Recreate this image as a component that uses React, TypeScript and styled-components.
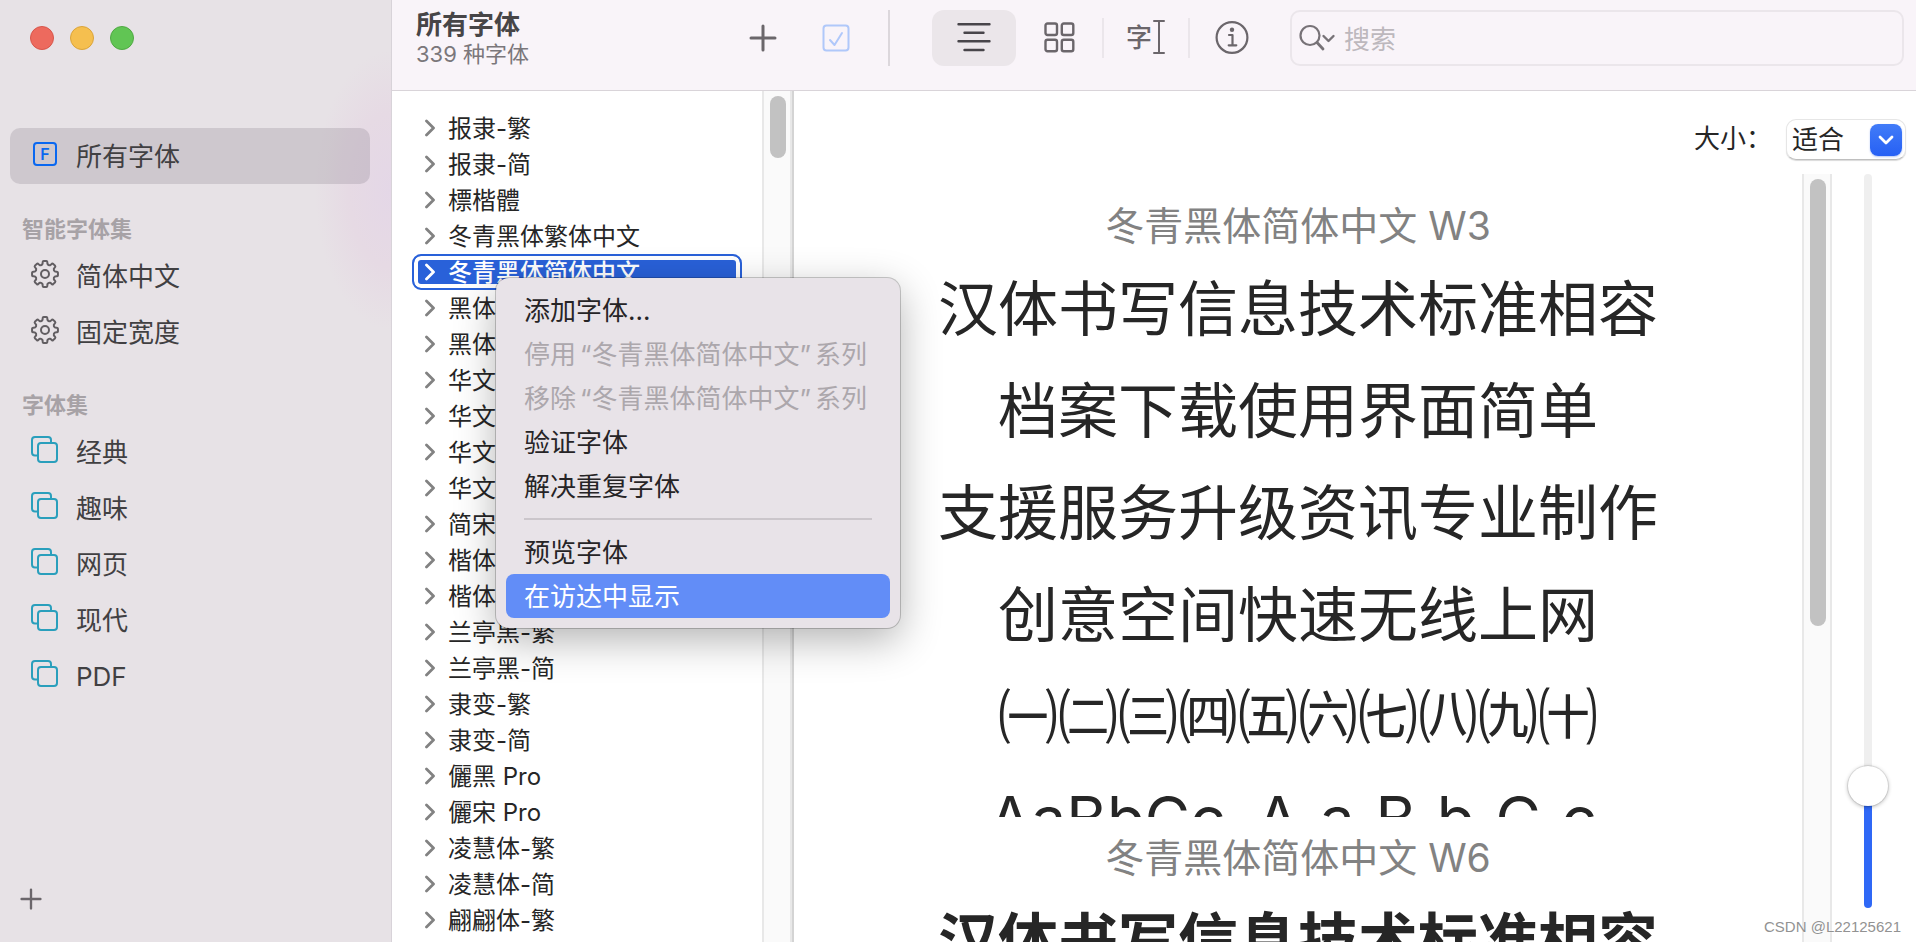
import React from "react";
import styled, { createGlobalStyle, css } from "styled-components";

const GlobalStyle = createGlobalStyle`
  *, *::before, *::after { box-sizing: border-box; }
  html, body, #root { height: 100%; margin: 0; }
  body {
    font-family: Inter, "Noto Sans CJK SC", sans-serif;
    color: #262626;
    background: #fff;
    overflow: hidden;
  }
  button, input, select { font: inherit; color: inherit; }
  button { border: 0; padding: 0; background: none; cursor: default; }
  ul { list-style: none; margin: 0; padding: 0; }
  svg { display: block; flex: none; }
`;

const Window = styled.div`
  position: relative;
  display: grid;
  grid-template-columns: 392px minmax(0, 1fr);
  grid-template-rows: minmax(0, 1fr);
  height: 100vh;
  overflow: hidden;
`;

/* ---------- Sidebar ---------- */

const Sidebar = styled.aside`
  display: flex;
  flex-direction: column;
  padding: 0 21px 0 10px;
  border-right: 1px solid #d8d3d9;
  background:
    radial-gradient(ellipse 76px 140px at 100% 190px, #e4d7e7 0%, #e6dae4 55%, rgba(231, 226, 230, 0) 100%),
    #e7e2e6;
`;

const WindowButtons = styled.div`
  display: flex;
  gap: 16px;
  height: 128px;
  padding: 26px 20px 0;
`;

const WindowButton = styled.button<{ $fill: string; $edge: string }>`
  width: 24px;
  height: 24px;
  border-radius: 50%;
  border: 1px solid ${(p) => p.$edge};
  background: ${(p) => p.$fill};
`;

const SideHeading = styled.h2`
  height: 64px;
  margin: 0;
  padding: 26px 12px 0;
  font-size: 22px;
  line-height: 38px;
  font-weight: 700;
  color: #a7a2a6;
`;

const SideItem = styled.button<{ $active?: boolean }>`
  display: flex;
  align-items: center;
  width: 100%;
  height: 56px;
  padding: 0 20px;
  gap: 16px;
  border-radius: 10px;
  font-size: 26px;
  line-height: 36px;
  color: #414042;
  text-align: left;
  ${(p) => p.$active && css`background: rgba(120, 110, 122, 0.22);`}
`;

const Label = styled.span`
  padding-top: 2px;
`;

const IconSlot = styled.span`
  display: flex;
  align-items: center;
  justify-content: center;
  width: 30px;
  height: 34px;
  padding-bottom: 4px;
`;

const LetterBox = styled.span`
  width: 24px;
  height: 24px;
  border: 2px solid #0a68f0;
  border-radius: 4px;
  font-size: 16px;
  line-height: 20px;
  font-weight: 600;
  text-align: center;
  color: #0a68f0;
`;

const AddCollection = styled.button`
  display: flex;
  align-items: center;
  justify-content: center;
  margin: auto 0 31px 9px;
  width: 24px;
  height: 24px;
`;

/* ---------- Toolbar ---------- */

const Main = styled.main`
  display: grid;
  grid-template-rows: 91px minmax(0, 1fr);
  min-height: 0;
`;

const Toolbar = styled.header`
  display: flex;
  align-items: flex-start;
  padding: 10px 12px 0 24px;
  border-bottom: 1px solid #d9d4d9;
  background: #f9f4f9;
`;

const TitleBlock = styled.div`
  flex: none;
  width: 320px;
`;

const Title = styled.h1`
  margin: 0;
  font-size: 26px;
  line-height: 30px;
  font-weight: 700;
  color: #474547;
`;

const Subtitle = styled.p`
  margin: 0;
  font-size: 22px;
  line-height: 28px;
  color: #7b777b;
`;

const ToolButton = styled.button<{ $width: number; $active?: boolean }>`
  display: flex;
  align-items: center;
  justify-content: center;
  flex: none;
  width: ${(p) => p.$width}px;
  height: 56px;
  border-radius: 12px;
  background: ${(p) => (p.$active ? "#ebe6ea" : "transparent")};
  color: #6b666b;
`;

const Divider = styled.span<{ $tall?: boolean }>`
  flex: none;
  width: 2px;
  height: ${(p) => (p.$tall ? 56 : 40)}px;
  margin: ${(p) => (p.$tall ? "0 42px 0 6px" : "8px 0 0")};
  background: ${(p) => (p.$tall ? "#dcd7dc" : "#ebe6eb")};
`;

const TextGlyph = styled.span`
  font-size: 26px;
  line-height: 34px;
  font-weight: 500;
`;

const SearchBox = styled.label`
  display: flex;
  align-items: center;
  flex: 1;
  min-width: 0;
  height: 56px;
  margin-left: 16px;
  padding: 0 8px 0 7px;
  gap: 8px;
  border: 2px solid #ebe6eb;
  border-radius: 10px;
`;

const SearchInput = styled.input`
  flex: 1;
  min-width: 0;
  height: 40px;
  padding: 2px 0 0;
  border: 0;
  outline: 0;
  background: none;
  font-size: 26px;
  &::placeholder { color: #bdb8bd; opacity: 1; }
`;

/* ---------- Font list ---------- */

const Panes = styled.div`
  display: grid;
  grid-template-columns: 370px 30px minmax(0, 1fr);
  grid-template-rows: minmax(0, 1fr);
  min-height: 0;
`;

const FontList = styled.ul`
  && { padding: 19px 20px 0; }
  min-height: 0;
`;

const FontItem = styled.li`
  position: relative;
  height: 36px;
`;

const FontRow = styled.button<{ $selected?: boolean }>`
  display: flex;
  align-items: center;
  width: 100%;
  height: 36px;
  padding: 0 13px;
  gap: 13px;
  font-size: 24px;
  line-height: 32px;
  text-align: left;
  white-space: nowrap;
  color: #262626;
  & > svg { color: #828282; }
  ${(p) => p.$selected && css`
    padding: 0 11px;
    border: 2px solid #2961d9;
    border-radius: 9px;
    background: #2961d9;
    box-shadow: inset 0 0 0 4px #fff;
    font-weight: 500;
    color: #fff;
    & > svg { color: #fff; }
  `}
`;

const ScrollTrack = styled.div`
  display: flex;
  justify-content: center;
  padding: 5px 0 5px 2px;
  border: solid #e8e8e8;
  border-width: 0 2px;
  background: #fafafa;
`;

const ScrollThumb = styled.div<{ $height: string }>`
  width: 16px;
  height: ${(p) => p.$height};
  border-radius: 8px;
  background: #c2c2c2;
`;

/* ---------- Context menu ---------- */

const Menu = styled.div`
  position: absolute;
  z-index: 2;
  top: 24px;
  left: 84px;
  width: 404px;
  padding: 10px;
  border-radius: 13px;
  background: #e8e3e8;
  box-shadow: 0 0 0 1px rgba(0, 0, 0, 0.2), 0 12px 40px rgba(0, 0, 0, 0.3);
`;

const MenuItem = styled.button<{ $highlighted?: boolean }>`
  display: block;
  width: 100%;
  height: 44px;
  padding: 0 18px;
  border-radius: 8px;
  font-size: 26px;
  line-height: 46px;
  text-align: left;
  white-space: nowrap;
  color: ${(p) => (p.$highlighted ? "#fff" : "#262426")};
  background: ${(p) => (p.$highlighted ? "#628df7" : "transparent")};
  &:disabled { color: #aca7ac; }
`;

const Quoted = styled.q`
  quotes: none;
  margin: 0 4px;
`;

const MenuRule = styled.hr`
  height: 2px;
  margin: 10px 18px;
  border: 0;
  background: #cbc6cb;
`;

/* ---------- Preview ---------- */

const Preview = styled.section`
  display: grid;
  grid-template-rows: 83px minmax(0, 1fr);
  min-height: 0;
  border-left: 2px solid #d4d4d4;
`;

const SizeBar = styled.div`
  display: flex;
  justify-content: flex-end;
  align-items: flex-start;
  padding: 28px 10px 0 0;
  gap: 14px;
  font-size: 26px;
  line-height: 40px;
`;

const SelectWrap = styled.span`
  position: relative;
  display: block;
  width: 120px;
  height: 41px;
`;

const SizeSelect = styled.select`
  appearance: none;
  width: 100%;
  height: 100%;
  padding: 0 36px 3px 5px;
  border: 1px solid #e6e6e6;
  border-bottom: 1px solid #bfbfbf;
  border-radius: 10px;
  background: #fff;
  box-shadow: 0 1px 1px rgba(0, 0, 0, 0.15);
  outline: 0;
`;

const SelectArrow = styled.span`
  position: absolute;
  top: 5px;
  right: 4px;
  display: flex;
  align-items: center;
  justify-content: center;
  width: 32px;
  height: 32px;
  border-radius: 8px;
  background: linear-gradient(#427cf8, #2660f4);
  box-shadow: 0 1px 2px rgba(40, 90, 220, 0.35);
  pointer-events: none;
`;

const PreviewBody = styled.div`
  display: grid;
  grid-template-columns: minmax(0, 1fr) 30px 84px;
  grid-template-rows: minmax(0, 1fr);
  min-height: 0;
`;

const Samples = styled.div`
  min-height: 0;
  padding-top: 11px;
  overflow: hidden;
  text-align: center;
  white-space: nowrap;
`;

const FaceName = styled.h3`
  margin: 0;
  padding-top: 9px;
  font-size: 39px;
  line-height: 64px;
  font-weight: 400;
  color: #828282;
`;

const SampleText = styled.div<{ $bold?: boolean }>`
  height: 559px;
  overflow: hidden;
  font-size: 60px;
  line-height: 102px;
  font-weight: ${(p) => (p.$bold ? 700 : 400)};
`;

const SampleLine = styled.p`
  margin: 0;
  white-space: pre;
  &:lang(en) { font-size: 62px; }
`;

const SliderCell = styled.div`
  display: flex;
  justify-content: center;
  min-height: 0;
  padding: 0 12px 34px 0;
`;

const SizeSlider = styled.input`
  appearance: none;
  writing-mode: vertical-lr;
  direction: rtl;
  width: 40px;
  height: 100%;
  margin: 0;
  background: none;
  &::-webkit-slider-runnable-track {
    width: 8px;
    height: 100%;
    border-radius: 4px;
    background: linear-gradient(to top, #2f68f6 17%, #efefef 17%);
  }
  &::-webkit-slider-thumb {
    appearance: none;
    width: 40px;
    height: 40px;
    margin-left: -16px;
    border-radius: 50%;
    background: #fff;
    box-shadow: 0 0 0 1px rgba(0, 0, 0, 0.08), 0 1px 4px rgba(0, 0, 0, 0.3);
  }
`;

const Watermark = styled.footer`
  position: absolute;
  right: 15px;
  bottom: 5px;
  font-family: "Liberation Sans", sans-serif;
  font-size: 15px;
  line-height: 20px;
  color: #929292;
  text-shadow: 0 0 2px #fff;
`;

/* ---------- Icons ---------- */

const PlusIcon = ({ size, color }: { size: number; color: string }) => (
  <svg width={size} height={size} viewBox="0 0 28 28" fill="none" stroke={color} strokeWidth={3} strokeLinecap="round">
    <path d="M14 2v24M2 14h24" />
  </svg>
);

const gearPath = (() => {
  const at = (radius: number, deg: number) => {
    const a = ((deg - 90) * Math.PI) / 180;
    return `${(14 + radius * Math.cos(a)).toFixed(2)} ${(14 + radius * Math.sin(a)).toFixed(2)}`;
  };
  const parts: string[] = [];
  for (let i = 0; i < 8; i++) {
    const c = i * 45;
    parts.push(`${i ? "L" : "M"}${at(10.2, c - 15)}`);
    parts.push(`Q${at(10.8, c - 12)} ${at(11.8, c - 11.5)}`);
    parts.push(`Q${at(13, c - 11)} ${at(13, c - 6)}`);
    parts.push(`L${at(13, c + 6)}`);
    parts.push(`Q${at(13, c + 11)} ${at(11.8, c + 11.5)}`);
    parts.push(`Q${at(10.8, c + 12)} ${at(10.2, c + 15)}`);
    parts.push(`Q${at(9.2, c + 22.5)} ${at(10.2, c + 30)}`);
  }
  return parts.join("") + "Z";
})();

const GearIcon = () => (
  <svg width="28" height="28" viewBox="0 0 28 28" fill="none" stroke="#625e62" strokeWidth="2" strokeLinejoin="round">
    <path d={gearPath} />
    <circle cx="14" cy="14" r="4" />
  </svg>
);

const StackIcon = () => (
  <svg width="28" height="28" viewBox="0 0 28 28" fill="none" stroke="#2a9fbc" strokeWidth="2">
    <path d="M7 19.500H4a3 3 0 0 1-3-3V4a3 3 0 0 1 3-3h13a3 3 0 0 1 3 3v3" />
    <rect x="7" y="7" width="19" height="19" rx="3" />
  </svg>
);

const CheckBoxIcon = () => (
  <svg width="28" height="28" viewBox="0 0 28 28" fill="none" stroke="#b0c8fa" strokeWidth="2" strokeLinecap="round" strokeLinejoin="round">
    <rect x="1.500" y="1.500" width="25" height="25" rx="3" />
    <path d="M8 16l4.500 5L20 9" />
  </svg>
);

const LinesIcon = () => (
  <svg width="34" height="30" viewBox="0 0 34 30" fill="none" stroke="#48454a" strokeWidth="2.400" strokeLinecap="round">
    <path d="M1.500 1.300h31M7.500 9.800h19M1.500 18.300h31M7.500 27h19" />
  </svg>
);

const GridIcon = () => (
  <svg width="32" height="32" viewBox="0 0 32 32" fill="none" stroke="currentColor" strokeWidth="2.400">
    <rect x="2.500" y="1.500" width="11.500" height="11.500" rx="2" />
    <rect x="18.800" y="1.500" width="11.500" height="11.500" rx="2" />
    <rect x="2.500" y="17.800" width="11.500" height="11.500" rx="2" />
    <rect x="18.800" y="17.800" width="11.500" height="11.500" rx="2" />
  </svg>
);

const CaretIcon = () => (
  <svg width="14" height="36" viewBox="0 0 14 36" fill="none" stroke="currentColor" strokeWidth="2" strokeLinecap="round">
    <path d="M2 1h10M2 33h10M7 1v32" />
  </svg>
);

const InfoIcon = () => (
  <svg width="34" height="34" viewBox="0 0 34 34" fill="none" stroke="currentColor" strokeWidth="2.200" strokeLinecap="round" strokeLinejoin="round">
    <circle cx="17" cy="16.500" r="15.400" />
    <circle cx="17" cy="8.700" r="2.200" fill="currentColor" stroke="none" />
    <path d="M14 14h3.500v10M13.700 24.300h7.600" />
  </svg>
);

const SearchIcon = () => (
  <svg width="37" height="28" viewBox="0 0 37 28" fill="none" stroke="#777277" strokeWidth="2.200" strokeLinecap="round" strokeLinejoin="round">
    <circle cx="11" cy="11.500" r="9.500" />
    <path d="M18 18.500l6 6.500" strokeWidth="2.800" />
    <path d="M24.500 12l5 5 5-5" strokeWidth="2.400" />
  </svg>
);

const ChevronRight = () => (
  <svg width="10" height="18" viewBox="0 0 10 18" fill="none" stroke="currentColor" strokeWidth="2.800" strokeLinecap="round" strokeLinejoin="round">
    <path d="M1.500 2l7 7-7 7" />
  </svg>
);

const ChevronDown = () => (
  <svg width="16" height="11" viewBox="0 0 16 11" fill="none" stroke="#fff" strokeWidth="2.800" strokeLinecap="round" strokeLinejoin="round">
    <path d="M2 2l6 6 6-6" />
  </svg>
);

/* ---------- Data ---------- */

const smartSets = ["简体中文", "固定宽度"];
const fontSets = ["经典", "趣味", "网页", "现代", "PDF"];

const families = [
  "报隶-繁", "报隶-简", "標楷體", "冬青黑体繁体中文", "冬青黑体简体中文",
  "黑体-繁", "黑体-简", "华文仿宋", "华文黑体", "华文楷体", "华文宋体",
  "简宋", "楷体-繁", "楷体-简", "兰亭黑-繁", "兰亭黑-简", "隶变-繁", "隶变-简",
  "儷黑 Pro", "儷宋 Pro", "凌慧体-繁", "凌慧体-简", "翩翩体-繁",
];
const selectedFamily = "冬青黑体简体中文";

const sampleLines = [
  { text: "汉体书写信息技术标准相容", lang: "zh" },
  { text: "档案下载使用界面简单", lang: "zh" },
  { text: "支援服务升级资讯专业制作", lang: "zh" },
  { text: "创意空间快速无线上网", lang: "zh" },
  { text: "㈠㈡㈢㈣㈤㈥㈦㈧㈨㈩", lang: "zh" },
  { text: "AaBbCc\u2002A\u2004a\u2004B\u2004b\u2004C\u2004c\u2006", lang: "en" },
];

const faces = [
  { name: "W3", bold: false },
  { name: "W6", bold: true },
];

const ContextMenu = () => (
  <Menu role="menu">
    <MenuItem role="menuitem">添加字体...</MenuItem>
    <MenuItem role="menuitem" disabled>停用<Quoted>“{selectedFamily}”</Quoted>系列</MenuItem>
    <MenuItem role="menuitem" disabled>移除<Quoted>“{selectedFamily}”</Quoted>系列</MenuItem>
    <MenuItem role="menuitem">验证字体</MenuItem>
    <MenuItem role="menuitem">解决重复字体</MenuItem>
    <MenuRule />
    <MenuItem role="menuitem">预览字体</MenuItem>
    <MenuItem role="menuitem" $highlighted>在访达中显示</MenuItem>
  </Menu>
);

export default function App() {
  return (
    <>
      <GlobalStyle />
      <Window>
        <Sidebar>
          <WindowButtons>
            <WindowButton aria-label="关闭" $fill="#ed6a5e" $edge="#d8564b" />
            <WindowButton aria-label="最小化" $fill="#f5bf4f" $edge="#dba43a" />
            <WindowButton aria-label="缩放" $fill="#61c554" $edge="#50a943" />
          </WindowButtons>
          <SideItem $active>
            <IconSlot><LetterBox>F</LetterBox></IconSlot>
            <Label>所有字体</Label>
          </SideItem>
          <SideHeading>智能字体集</SideHeading>
          {smartSets.map((name) => (
            <SideItem key={name}>
              <IconSlot><GearIcon /></IconSlot>
              <Label>{name}</Label>
            </SideItem>
          ))}
          <SideHeading>字体集</SideHeading>
          {fontSets.map((name) => (
            <SideItem key={name}>
              <IconSlot><StackIcon /></IconSlot>
              <Label>{name}</Label>
            </SideItem>
          ))}
          <AddCollection aria-label="添加字体集">
            <PlusIcon size={22} color="#6b666b" />
          </AddCollection>
        </Sidebar>

        <Main>
          <Toolbar>
            <TitleBlock>
              <Title>所有字体</Title>
              <Subtitle>339 种字体</Subtitle>
            </TitleBlock>
            <ToolButton $width={54} aria-label="添加字体"><PlusIcon size={28} color="#6b666b" /></ToolButton>
            <ToolButton $width={92} aria-label="启用字体"><CheckBoxIcon /></ToolButton>
            <Divider $tall />
            <ToolButton $width={84} $active aria-label="样本"><LinesIcon /></ToolButton>
            <ToolButton $width={86} aria-label="字符集"><GridIcon /></ToolButton>
            <Divider />
            <ToolButton $width={84} aria-label="自定">
              <TextGlyph>字</TextGlyph>
              <CaretIcon />
            </ToolButton>
            <Divider />
            <ToolButton $width={84} aria-label="简介"><InfoIcon /></ToolButton>
            <SearchBox>
              <SearchIcon />
              <SearchInput type="search" placeholder="搜索" aria-label="搜索" />
            </SearchBox>
          </Toolbar>

          <Panes>
            <FontList>
              {families.map((name) => {
                const selected = name === selectedFamily;
                return (
                  <FontItem key={name}>
                    <FontRow $selected={selected}>
                      <ChevronRight />
                      <Label>{name}</Label>
                    </FontRow>
                    {selected && <ContextMenu />}
                  </FontItem>
                );
              })}
            </FontList>
            <ScrollTrack><ScrollThumb $height="62px" /></ScrollTrack>

            <Preview>
              <SizeBar>
                <label htmlFor="size">大小：</label>
                <SelectWrap>
                  <SizeSelect id="size" defaultValue="fit">
                    <option value="fit">适合</option>
                  </SizeSelect>
                  <SelectArrow><ChevronDown /></SelectArrow>
                </SelectWrap>
              </SizeBar>
              <PreviewBody>
                <Samples>
                  {faces.map((face) => (
                    <article key={face.name}>
                      <FaceName>{selectedFamily} {face.name}</FaceName>
                      <SampleText $bold={face.bold}>
                        {sampleLines.map((line) => (
                          <SampleLine key={line.text} lang={line.lang}>{line.text}</SampleLine>
                        ))}
                      </SampleText>
                    </article>
                  ))}
                </Samples>
                <ScrollTrack><ScrollThumb $height="59%" /></ScrollTrack>
                <SliderCell>
                  <SizeSlider type="range" min={0} max={1000} defaultValue={147} aria-label="预览大小" />
                </SliderCell>
              </PreviewBody>
            </Preview>
          </Panes>
        </Main>
        <Watermark>CSDN @L22125621</Watermark>
      </Window>
    </>
  );
}
